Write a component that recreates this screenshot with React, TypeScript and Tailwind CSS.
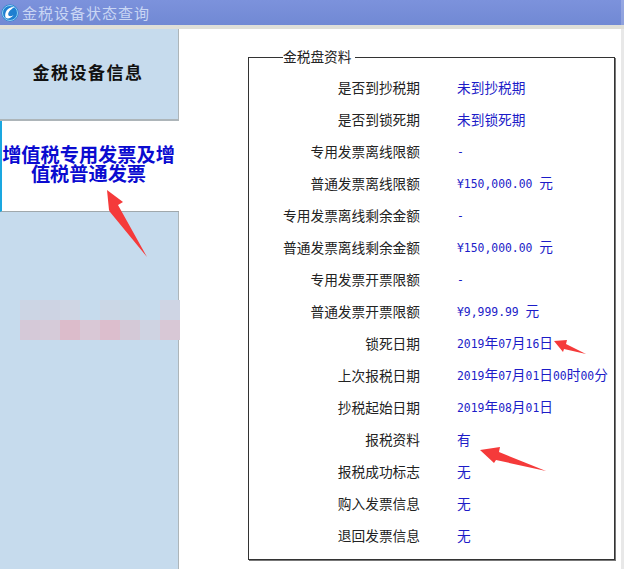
const rows: [string, string][] = [
  ["是否到抄税期", "未到抄税期"],
  ["是否到锁死期", "未到锁死期"],
  ["专用发票离线限额", "-"],
  ["普通发票离线限额", "¥150,000.00 元"],
  ["专用发票离线剩余金额", "-"],
  ["普通发票离线剩余金额", "¥150,000.00 元"],
  ["专用发票开票限额", "-"],
  ["普通发票开票限额", "¥9,999.99 元"],
  ["锁死日期", "2019年07月16日"],
  ["上次报税日期", "2019年07月01日00时00分"],
  ["抄税起始日期", "2019年08月01日"],
  ["报税资料", "有"],
  ["报税成功标志", "无"],
  ["购入发票信息", "无"],
  ["退回发票信息", "无"],
];

const mosaicTop = ["#ccd5e4", "#cdd3e3", "#cfd6e4", "#c6dbed", "#cbd7e6", "#c8d8e7", "#c6dbed", "#cfd5e4"];
const mosaicBottom = ["#d5c9d8", "#d6cbd9", "#dcbccb", "#d9c8d6", "#dcbecd", "#d4c9d7", "#cfd3e2", "#d8c8d6"];

function Mixed({ text }: { text: string }) {
  const parts = text.match(/[\x00-\x7f¥]+|[^\x00-\x7f¥]+/g) ?? [];
  return (
    <>
      {parts.map((p, i) =>
        /^[\x00-\x7f¥]/.test(p) ? (
          <span key={i} className="font-['DejaVu_Sans_Mono'] text-[11.4px] whitespace-pre">
            {p}
          </span>
        ) : (
          <span key={i}>{p}</span>
        ),
      )}
    </>
  );
}

export default function App() {
  return (
    <div
      className="relative w-[624px] h-[569px] overflow-hidden bg-white flex flex-col"
      style={{ fontFamily: '"Noto Sans CJK SC", "Liberation Sans", sans-serif' }}
    >
      <div className="h-[25px] shrink-0 flex items-center bg-gradient-to-b from-[#7c92dc] to-[#7189d4]">
        <svg width="18" height="18" viewBox="0 0 18 18" className="ml-[1px]">
          <circle cx="9" cy="9" r="8.5" fill="#1f7fd0" />
          <circle cx="9" cy="9" r="7.5" fill="none" stroke="#8fd0f2" strokeWidth="1" />
          <path d="M13.5 3 C7 2.5 3 8 4.5 13.5 C6.5 15.5 10 14.5 12.5 11 C10 12.8 7.2 12.5 7.2 10.3 C7.2 7.5 10.5 5 13.5 3Z" fill="#ffffff" />
        </svg>
        <span className="ml-[3px] text-[15px] leading-none tracking-[1px] text-[#c9d6f4]">金税设备状态查询</span>
      </div>
      <div className="h-[4px] shrink-0 bg-[#dfdfd8]" />
      <div className="flex-1 flex min-h-0">
        <div className="w-[179px] shrink-0 flex flex-col">
          <div className="h-[92px] shrink-0 flex items-center justify-center pb-[5px] bg-[#c6dbed] border-r border-b-2 border-[#adb5b9] text-[17px] font-bold tracking-[1.5px] text-[#111111]">
            <div className="-ml-[2px]">金税设备信息</div>
          </div>
          <div className="h-[91px] shrink-0 flex items-center justify-center pb-[4px] bg-white border-l-2 border-l-[#1aa7e0] border-b border-b-[#a0a8ac] text-[19.2px] leading-[19px] font-bold text-[#0b0bd0] text-center whitespace-nowrap">
            <div className="-ml-[4px]">
              增值税专用发票及增
              <br />
              值税普通发票
            </div>
          </div>
          <div className="flex-1 bg-[#c6dbed] border-r border-[#adb5b9] pt-[88px] pl-[20px]">
            <div className="grid grid-cols-[repeat(8,20px)] grid-rows-[20px_20px] -mr-[1px]">
              {mosaicTop.map((c, i) => (
                <div key={i} style={{ backgroundColor: c }} />
              ))}
              {mosaicBottom.map((c, i) => (
                <div key={i} style={{ backgroundColor: c }} />
              ))}
            </div>
          </div>
        </div>
        <div className="flex-1 pl-[69px] pr-[9px] pt-[21px]">
          <fieldset className="h-[510px] border border-[#333333] pl-[34px] pr-0 pt-0 shadow-[1px_1px_0_#777777]">
            <legend className="relative -left-[3px] -top-[1px] pl-[3px] pr-[1px] text-[13.7px] leading-[14px] text-[#222222]">金税盘资料</legend>
            <div className="flex flex-col pt-[7px]">
              {rows.map(([label, value]) => (
                <div key={label} className="h-[32px] flex items-center text-[13.7px]">
                  <div className="w-[137px] shrink-0 text-right text-[#222222] whitespace-nowrap">{label}</div>
                  <div className="ml-[37px] whitespace-nowrap text-[#1c1cc8]">
                    <Mixed text={value} />
                  </div>
                </div>
              ))}
            </div>
          </fieldset>
        </div>
      </div>
      <svg className="absolute left-0 top-0 pointer-events-none" width="624" height="569" viewBox="0 0 624 569">
        <path d="M107 190 L123 202 L118 205 L147 257 L110 212 L109 210 Z" fill="#f53a3a" />
        <path d="M554 341 L567 340 L566 344 L586 354 L564 349 L563 352 Z" fill="#f53a3a" />
        <path d="M480 450 L500 447 L499 452 L546 471 L496 460 L494 463 Z" fill="#f53a3a" />
      </svg>
      <div className="absolute right-0 top-0 h-[25px] w-[3px] bg-white/20" />
      <div className="absolute right-0 top-[29px] bottom-0 w-[3px] bg-[#e8e8e8]" />
    </div>
  );
}
